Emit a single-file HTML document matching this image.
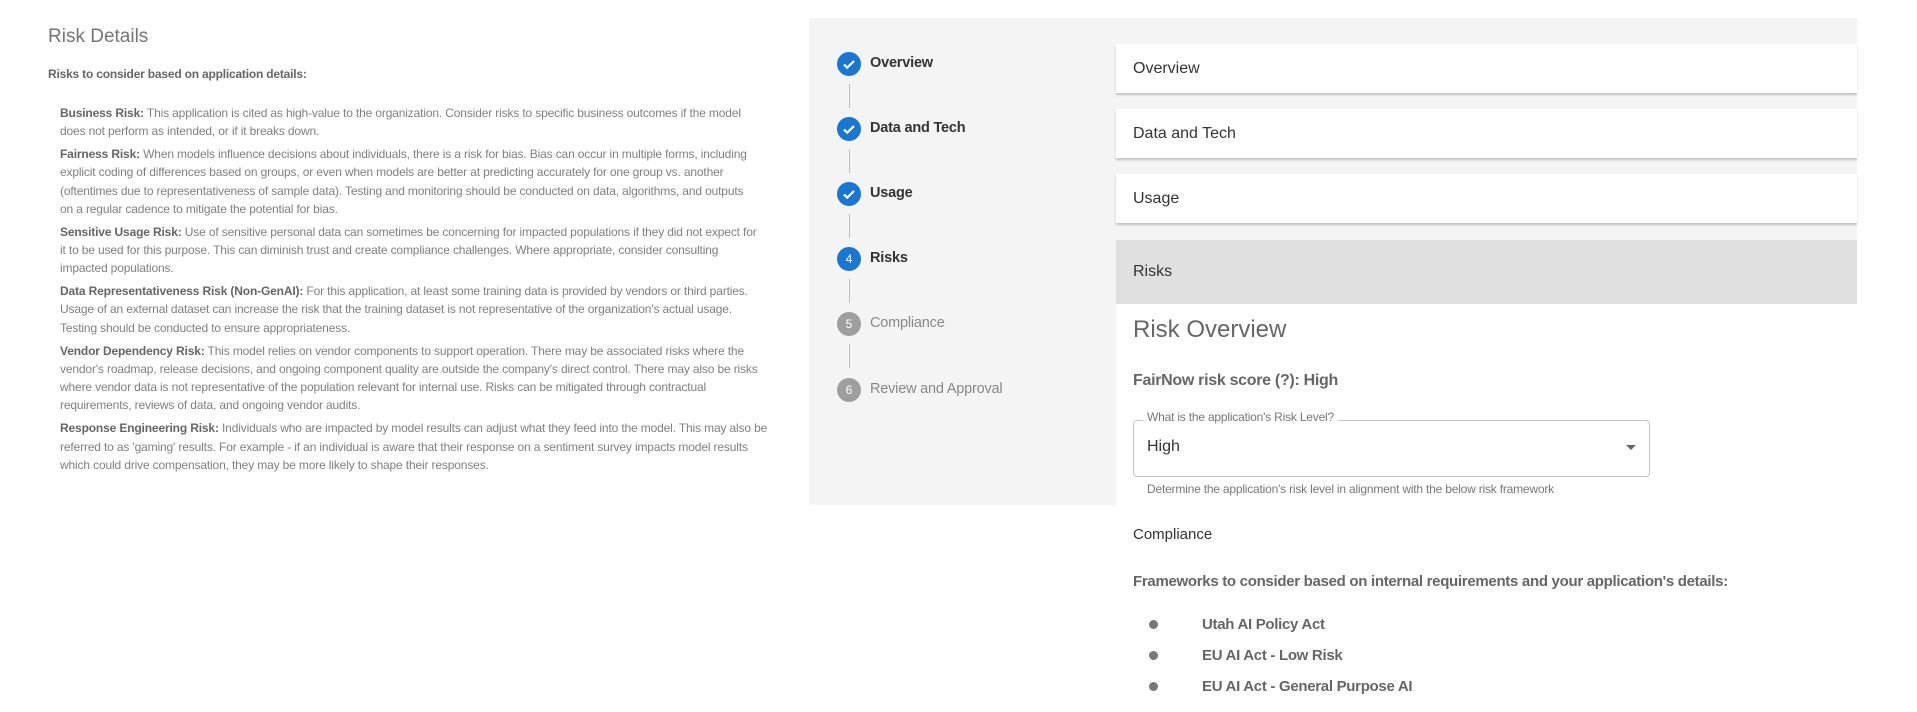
<!DOCTYPE html>
<html><head><meta charset="utf-8"><style>
*{margin:0;padding:0;box-sizing:border-box}
body{width:1917px;height:712px;background:#fff;font-family:"Liberation Sans",Arial,sans-serif;position:relative;overflow:hidden;color:#757575}
.a{position:absolute;white-space:nowrap}
.h{font-size:19px;color:#757575;left:48px;top:26px}
.sub{left:48px;top:67px;font-size:12px;font-weight:bold;color:#666;letter-spacing:-0.2px}
.paras{position:absolute;left:60px;top:104px;width:760px;font-size:12px;line-height:18.3px;color:#808080;letter-spacing:-0.15px;white-space:nowrap}
.paras p{margin-bottom:4.5px}
.paras b{color:#666}
.panel{position:absolute;left:809px;top:18px;width:1048px;height:487px;background:#f4f4f4}
.circ{position:absolute;left:837px;width:24px;height:24px;border-radius:50%;background:#1976d2;color:#fff;font-size:12px;text-align:center;line-height:24px}
.circ.g{background:#9e9e9e}
.lab{position:absolute;left:870px;font-size:14.5px;color:#333;font-weight:bold;letter-spacing:-0.2px}
.lab.g{color:#888;font-weight:normal}
.line{position:absolute;left:849px;width:1px;height:24px;background:#bdbdbd}
.card{position:absolute;left:1116px;width:741px;height:49px;background:#fff;box-shadow:0 2px 2px rgba(0,0,0,.2);font-size:16px;color:#333;padding-left:17px;line-height:49px}
.fw{font-size:15px;font-weight:bold;color:#666;letter-spacing:-0.3px}
</style></head><body>
<div class="a h">Risk Details</div>
<div class="a sub">Risks to consider based on application details:</div>
<div class="paras">
<p><b>Business Risk:</b> This application is cited as high-value to the organization. Consider risks to specific business outcomes if the model<br>does not perform as intended, or if it breaks down.</p>
<p><b>Fairness Risk:</b> When models influence decisions about individuals, there is a risk for bias. Bias can occur in multiple forms, including<br>explicit coding of differences based on groups, or even when models are better at predicting accurately for one group vs. another<br>(oftentimes due to representativeness of sample data). Testing and monitoring should be conducted on data, algorithms, and outputs<br>on a regular cadence to mitigate the potential for bias.</p>
<p><b>Sensitive Usage Risk:</b> Use of sensitive personal data can sometimes be concerning for impacted populations if they did not expect for<br>it to be used for this purpose. This can diminish trust and create compliance challenges. Where appropriate, consider consulting<br>impacted populations.</p>
<p><b>Data Representativeness Risk (Non-GenAI):</b> For this application, at least some training data is provided by vendors or third parties.<br>Usage of an external dataset can increase the risk that the training dataset is not representative of the organization's actual usage.<br>Testing should be conducted to ensure appropriateness.</p>
<p><b>Vendor Dependency Risk:</b> This model relies on vendor components to support operation. There may be associated risks where the<br>vendor's roadmap, release decisions, and ongoing component quality are outside the company's direct control. There may also be risks<br>where vendor data is not representative of the population relevant for internal use. Risks can be mitigated through contractual<br>requirements, reviews of data, and ongoing vendor audits.</p>
<p><b>Response Engineering Risk:</b> Individuals who are impacted by model results can adjust what they feed into the model. This may also be<br>referred to as 'gaming' results. For example - if an individual is aware that their response on a sentiment survey impacts model results<br>which could drive compensation, they may be more likely to shape their responses.</p>
</div>
<div class="panel"></div>
<div class="circ" style="top:52px"><svg width="24" height="24" viewBox="0 0 24 24"><path d="M7 12.5l3.2 3.2L17 9" stroke="#fff" stroke-width="2.2" fill="none"/></svg></div>
<div class="lab" style="top:55px">Overview</div>
<div class="line" style="top:84px"></div>
<div class="circ" style="top:117px"><svg width="24" height="24" viewBox="0 0 24 24"><path d="M7 12.5l3.2 3.2L17 9" stroke="#fff" stroke-width="2.2" fill="none"/></svg></div>
<div class="lab" style="top:120px">Data and Tech</div>
<div class="line" style="top:149px"></div>
<div class="circ" style="top:182px"><svg width="24" height="24" viewBox="0 0 24 24"><path d="M7 12.5l3.2 3.2L17 9" stroke="#fff" stroke-width="2.2" fill="none"/></svg></div>
<div class="lab" style="top:185px">Usage</div>
<div class="line" style="top:214px"></div>
<div class="circ" style="top:247px">4</div>
<div class="lab" style="top:250px">Risks</div>
<div class="line" style="top:279px"></div>
<div class="circ g" style="top:312px">5</div>
<div class="lab g" style="top:315px">Compliance</div>
<div class="line" style="top:344px"></div>
<div class="circ g" style="top:378px">6</div>
<div class="lab g" style="top:381px">Review and Approval</div>
<div class="card" style="top:44px">Overview</div>
<div class="card" style="top:109px">Data and Tech</div>
<div class="card" style="top:174px">Usage</div>
<div class="card" style="top:240px;height:64px;line-height:64px;background:#e0e0e0;box-shadow:none">Risks</div>
<div style="position:absolute;left:1116px;top:304px;width:741px;height:201px;background:#fff"></div>
<div class="a" style="left:1133px;top:316px;font-size:24px;color:#666">Risk Overview</div>
<div class="a fw" style="left:1133px;top:372px;font-size:16px">FairNow risk score (?): High</div>
<div style="position:absolute;left:1133px;top:420px;width:517px;height:57px;border:1px solid #c4c4c4;border-radius:4px"></div>
<div class="a" style="left:1143px;top:410px;font-size:12px;color:#777;background:#fff;padding:0 4px;letter-spacing:-0.2px">What is the application's Risk Level?</div>
<div class="a" style="left:1147px;top:438px;font-size:16px;color:#333">High</div>
<div class="a" style="left:1626px;top:445px;width:0;height:0;border-left:5px solid transparent;border-right:5px solid transparent;border-top:5px solid #666"></div>
<div class="a" style="left:1147px;top:482px;font-size:12px;color:#777;letter-spacing:-0.2px">Determine the application's risk level in alignment with the below risk framework</div>
<div class="a" style="left:1133px;top:526px;font-size:15px;color:#333">Compliance</div>
<div class="a fw" style="left:1133px;top:573px">Frameworks to consider based on internal requirements and your application's details:</div>
<div class="a" style="left:1149px;top:620px;width:9px;height:9px;border-radius:50%;background:#777"></div>
<div class="a fw" style="left:1202px;top:616px">Utah AI Policy Act</div>
<div class="a" style="left:1149px;top:651px;width:9px;height:9px;border-radius:50%;background:#777"></div>
<div class="a fw" style="left:1202px;top:647px">EU AI Act - Low Risk</div>
<div class="a" style="left:1149px;top:682px;width:9px;height:9px;border-radius:50%;background:#777"></div>
<div class="a fw" style="left:1202px;top:678px">EU AI Act - General Purpose AI</div>
</body></html>
